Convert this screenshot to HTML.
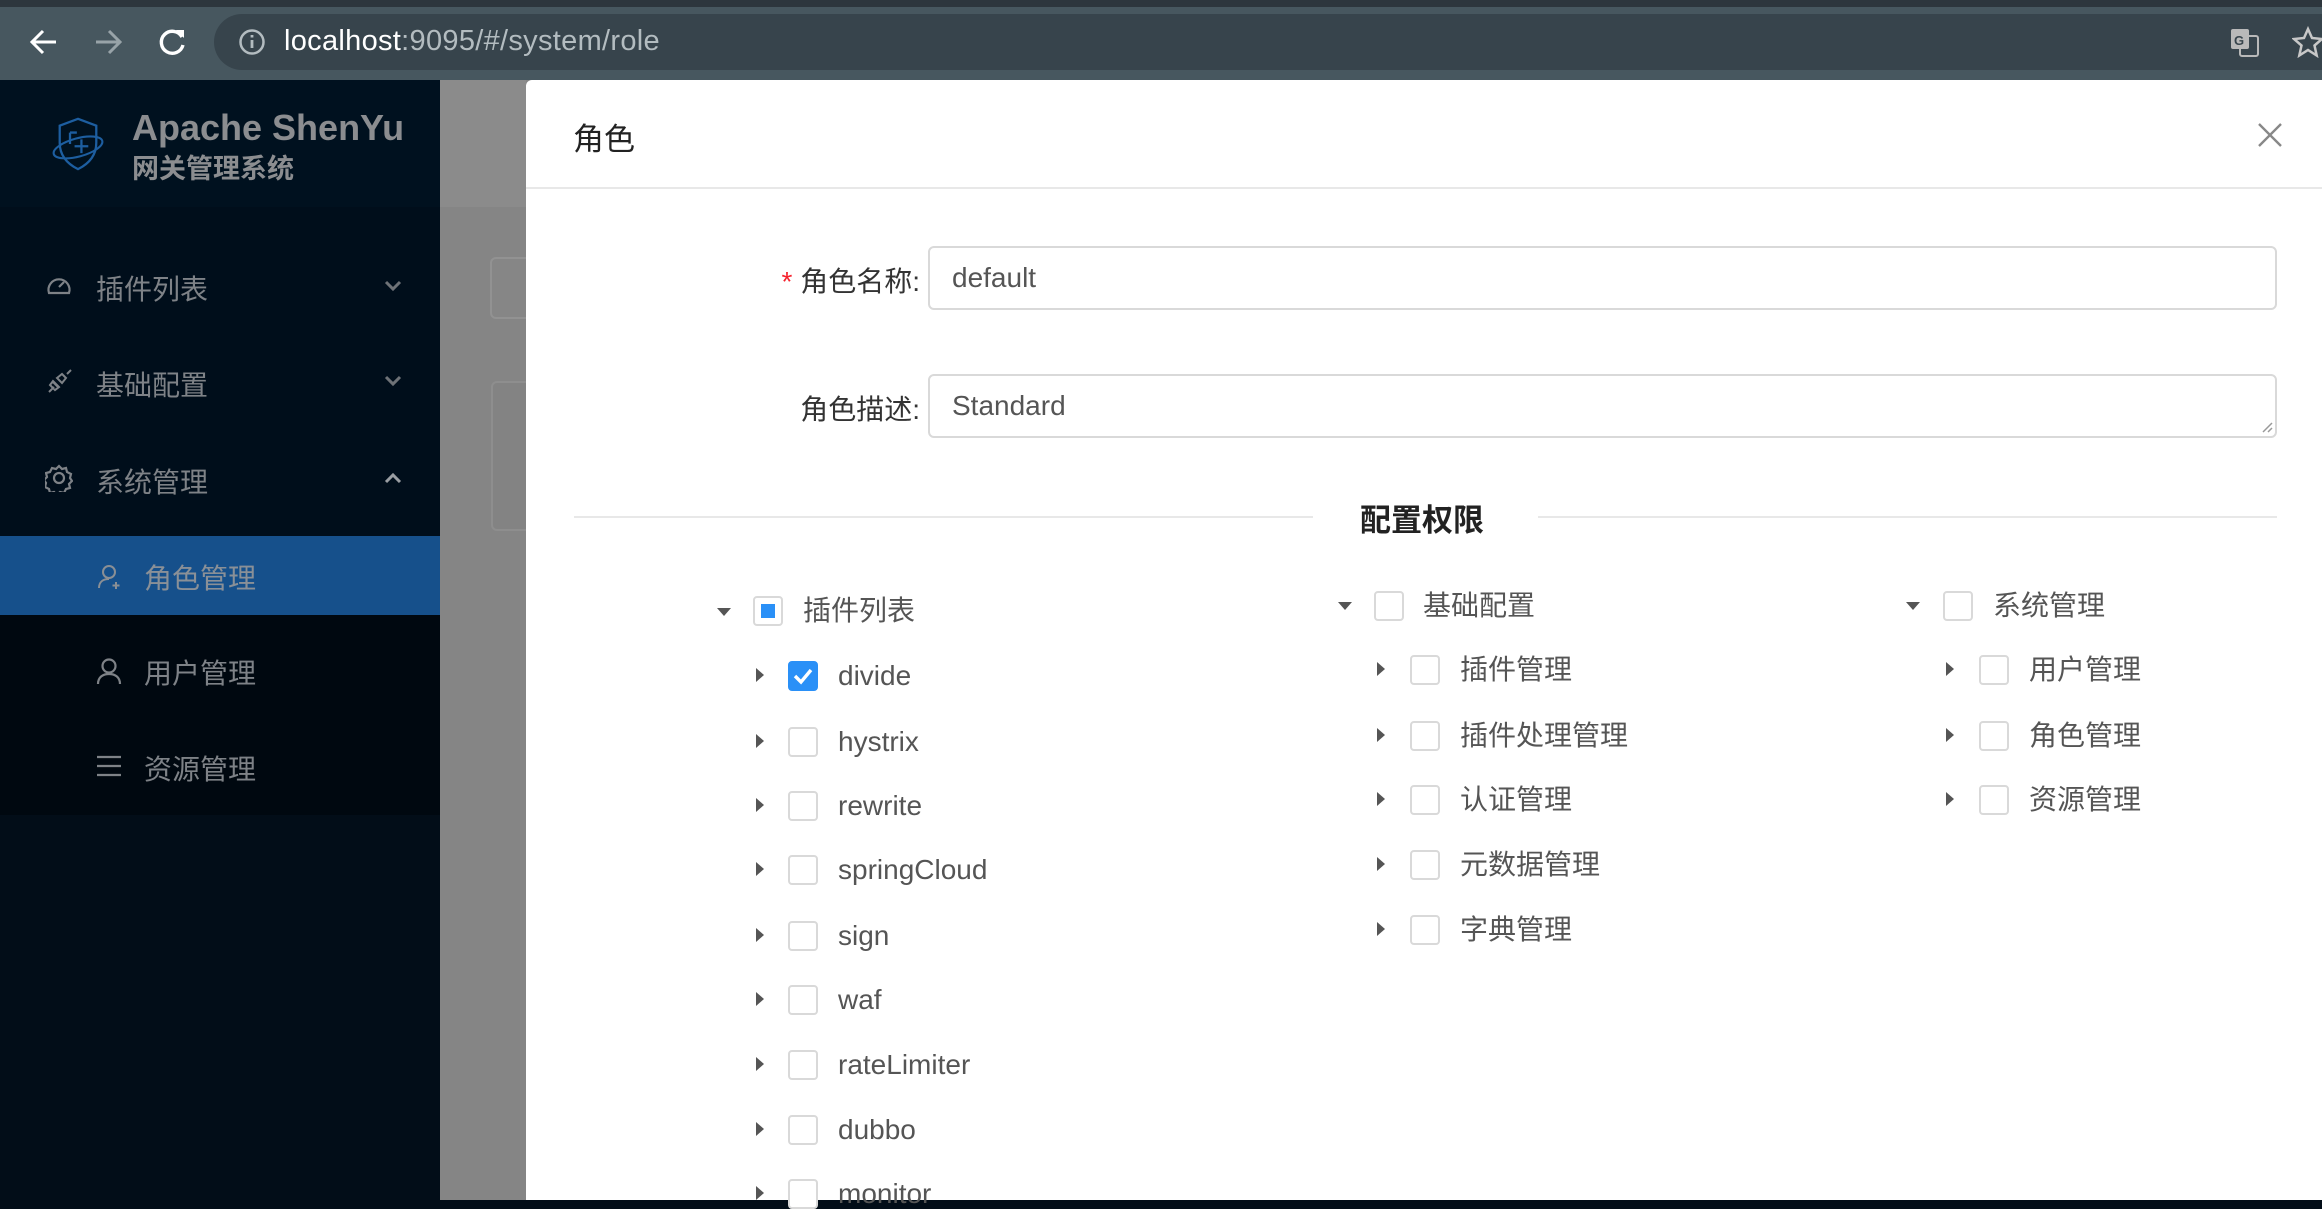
<!DOCTYPE html>
<html style="background:#020d18"><head><meta charset="utf-8"><style>
*{box-sizing:border-box;margin:0;padding:0}
body{width:2322px;height:1200px;overflow:hidden;background:#858585;font-family:"Liberation Sans","Noto Sans CJK SC",sans-serif;position:relative}
.abs{position:absolute}
.top{left:0;top:0;width:2322px;height:7px;background:#2d363d}
.bar{left:0;top:7px;width:2322px;height:73px;background:#47575f}
.url{left:214px;top:14px;width:2140px;height:56px;border-radius:28px;background:#37444c}
.urltext{left:284px;top:25px;font-size:29px;color:#b3bcc0;letter-spacing:0.3px}
.side{left:0;top:80px;width:440px;height:1120px;background:#020d18}
.logo{left:0;top:80px;width:440px;height:127px;background:#00111f}
.menu{left:0;top:207px;width:440px;height:330px;background:#000e1b}
.sub{left:0;top:537px;width:440px;height:278px;background:#000810}
.sel{left:0;top:536px;width:440px;height:79px;background:#16508b}
.mi{font-size:28px;color:#7e8287}
.modal{left:526px;top:80px;width:1800px;height:1120px;background:#fff;border-top-left-radius:6px}
.hdr{left:526px;top:187px;width:1796px;height:2px;background:#e8e8e8}
.lab{font-size:28px;color:#333;text-align:right}
.inp{border:2px solid #d9d9d9;border-radius:6px;background:#fff;font-size:28px;color:#555;padding-left:22px;display:flex;align-items:center}
.cb{width:30px;height:30px;border:2px solid #d9d9d9;border-radius:4px;background:#fff}
.car{width:0;height:0;border-top:7px solid transparent;border-bottom:7px solid transparent;border-left:8px solid #555}
.cdown{width:0;height:0;border-left:7px solid transparent;border-right:7px solid transparent;border-top:8px solid #555}
.t{font-size:28px;color:#555;line-height:30px}
</style></head><body>
<div class="abs top"></div><div class="abs bar"></div><div class="abs url"></div>
<svg class="abs" style="left:28px;top:26px" width="32" height="32" viewBox="0 0 32 32"><path d="M28 16H5M15 5L4 16l11 11" stroke="#fff" stroke-width="3" fill="none"/></svg>
<svg class="abs" style="left:92px;top:26px" width="32" height="32" viewBox="0 0 32 32"><path d="M4 16h23M17 5l11 11-11 11" stroke="#98a3a8" stroke-width="3" fill="none"/></svg>
<svg class="abs" style="left:156px;top:26px" width="32" height="32" viewBox="0 0 32 32"><path d="M26 11A11 11 0 1 0 27 19" stroke="#fff" stroke-width="3.4" fill="none"/><path d="M20 4h8v8z" fill="#fff"/></svg>
<svg class="abs" style="left:238px;top:28px" width="28" height="28" viewBox="0 0 28 28"><circle cx="14" cy="14" r="11.5" stroke="#b3bcc0" stroke-width="2.5" fill="none"/><path d="M14 12v8M14 7v2.5" stroke="#b3bcc0" stroke-width="2.8"/></svg>
<div class="abs urltext"><span style="color:#fff">localhost</span>:9095/#/system/role</div>
<svg class="abs" style="left:2230px;top:28px" width="30" height="30" viewBox="0 0 30 30"><rect x="1" y="1" width="18" height="20" rx="2" fill="#b9b9b9"/><rect x="10" y="8" width="18" height="20" rx="2" fill="none" stroke="#b9b9b9" stroke-width="2"/><text x="4" y="17" font-size="13" font-weight="bold" fill="#37444c" font-family="Liberation Sans">G</text></svg>
<svg class="abs" style="left:2292px;top:26px" width="32" height="32" viewBox="0 0 32 32"><path d="M16 3l4 9 10 1-7.5 6.5 2.2 10L16 24l-8.7 5.5 2.2-10L2 13l10-1z" stroke="#c8c8c8" stroke-width="2.5" fill="none"/></svg>

<div class="abs side"></div><div class="abs logo"></div><div class="abs menu"></div><div class="abs sub"></div><div class="abs sel"></div>
<svg class="abs" style="left:48px;top:112px" width="60" height="64" viewBox="0 0 50 56"><path d="M25 6l16 6v15c0 12-8 19-16 23C17 46 9 39 9 27V12z" stroke="#1d5ea0" stroke-width="2" fill="none"/><ellipse cx="25" cy="31" rx="22" ry="8" transform="rotate(-15 25 31)" stroke="#1d5ea0" stroke-width="1.8" fill="none"/><path d="M18 18v10M18 18h6M28 24v12M22 30h12" stroke="#1d5ea0" stroke-width="2"/></svg>
<div class="abs" style="left:132px;top:107px;font-size:36px;font-weight:bold;color:#8b8d90">Apache ShenYu</div>
<div class="abs" style="left:132px;top:147px;font-size:27px;font-weight:bold;color:#8b8d90">网关管理系统</div>

<svg class="abs" style="left:45px;top:272px" width="28" height="26" viewBox="0 0 26 26"><path d="M3 21a10.5 10.5 0 1 1 20 0z" stroke="#7e8287" stroke-width="2.2" fill="none"/><path d="M13 15l5-5" stroke="#7e8287" stroke-width="2.2"/></svg>
<div class="abs mi" style="left:96px;top:268px">插件列表</div>
<svg class="abs" style="left:383px;top:279px" width="20" height="14" viewBox="0 0 20 14"><path d="M3 3l7 7 7-7" stroke="#6e7277" stroke-width="3" fill="none"/></svg>
<svg class="abs" style="left:45px;top:367px" width="28" height="28" viewBox="0 0 28 28"><path d="M4 25l5-5M22 7l4-4M8 15l5 5M12 11l5-4 4 4-4 5z M8 14l-3 4 5 5 4-3z" stroke="#7e8287" stroke-width="2" fill="none"/></svg>
<div class="abs mi" style="left:96px;top:364px">基础配置</div>
<svg class="abs" style="left:383px;top:374px" width="20" height="14" viewBox="0 0 20 14"><path d="M3 3l7 7 7-7" stroke="#6e7277" stroke-width="3" fill="none"/></svg>
<svg class="abs" style="left:45px;top:464px" width="28" height="28" viewBox="0 0 28 28"><path d="M14 2l3 3 4-1 1 4 4 2-1 4 2 3-3 3 1 4-4 1-2 4-4-1-3 3-3-3-4 1-1-4-4-2 1-4-2-3 3-3-1-4 4-1 2-4 4 1z" stroke="#7e8287" stroke-width="2.2" fill="none"/><circle cx="14" cy="14" r="5" stroke="#7e8287" stroke-width="2.2" fill="none"/></svg>
<div class="abs mi" style="left:96px;top:461px">系统管理</div>
<svg class="abs" style="left:383px;top:471px" width="20" height="14" viewBox="0 0 20 14"><path d="M3 11l7-7 7 7" stroke="#9a9ea3" stroke-width="3" fill="none"/></svg>
<svg class="abs" style="left:96px;top:562px" width="28" height="28" viewBox="0 0 28 28"><circle cx="13" cy="10" r="6" stroke="#8a8f95" stroke-width="2" fill="none"/><path d="M3 26c0-6 4-9 10-9M20 20v7M16.5 23.5h7" stroke="#8a8f95" stroke-width="2" fill="none"/></svg>
<div class="abs mi" style="left:144px;top:557px;color:#8a9097">角色管理</div>
<svg class="abs" style="left:96px;top:657px" width="26" height="28" viewBox="0 0 26 28"><circle cx="13" cy="9" r="6.5" stroke="#7e8287" stroke-width="2.2" fill="none"/><path d="M2 27c0-7 5-10 11-10s11 3 11 10" stroke="#7e8287" stroke-width="2.2" fill="none"/></svg>
<div class="abs mi" style="left:144px;top:652px">用户管理</div>
<svg class="abs" style="left:96px;top:754px" width="26" height="24" viewBox="0 0 26 24"><path d="M1 3h24M1 12h24M1 21h24" stroke="#7e8287" stroke-width="2.2"/></svg>
<div class="abs mi" style="left:144px;top:748px">资源管理</div>

<div class="abs" style="left:440px;top:80px;width:86px;height:127px;background:#8b8b8b"></div>
<div class="abs" style="left:490px;top:257px;width:60px;height:62px;border:2px solid #929292;border-radius:6px;background:#868686"></div>
<div class="abs" style="left:491px;top:381px;width:60px;height:150px;border:2px solid #8e8e8e;border-radius:6px;background:#838383"></div>

<div class="abs modal"></div><div class="abs hdr"></div>
<div class="abs" style="left:573px;top:114px;font-size:31px;color:#222">角色</div>
<svg class="abs" style="left:2257px;top:122px" width="26" height="26" viewBox="0 0 26 26"><path d="M2 2l22 22M24 2L2 24" stroke="#888" stroke-width="2.4"/></svg>

<div class="abs lab" style="left:700px;top:260px;width:220px"><span style="color:#f5222d">* </span>角色名称:</div>
<div class="abs inp" style="left:928px;top:246px;width:1349px;height:64px">default</div>
<div class="abs lab" style="left:700px;top:388px;width:220px">角色描述:</div>
<div class="abs inp" style="left:928px;top:374px;width:1349px;height:64px">Standard</div>
<svg class="abs" style="left:2260px;top:420px" width="14" height="14" viewBox="0 0 14 14"><path d="M12 3L3 12M12 8l-4 4" stroke="#999" stroke-width="1.5"/></svg>
<div class="abs" style="left:574px;top:516px;width:739px;height:2px;background:#e8e8e8"></div>
<div class="abs" style="left:1538px;top:516px;width:739px;height:2px;background:#e8e8e8"></div>
<div class="abs" style="left:1360px;top:495px;font-size:31px;font-weight:bold;color:#222">配置权限</div>

<div class="abs cdown" style="left:717px;top:608px"></div>
<div class="abs cb" style="left:753px;top:596px"></div>
<div class="abs" style="left:761px;top:604px;width:14px;height:14px;background:#2a90f7"></div>
<div class="abs t" style="left:803px;top:596px">插件列表</div>

<div class="abs car" style="left:756px;top:668px"></div>
<div class="abs cb" style="left:788px;top:661px;background:#2a90f7;border-color:#2a90f7"></div>
<svg class="abs" style="left:792px;top:666px" width="22" height="20" viewBox="0 0 22 20"><path d="M3 10l6 6L19 4" stroke="#fff" stroke-width="3.4" fill="none"/></svg>
<div class="abs t" style="left:838px;top:661px">divide</div>

<div class="abs car" style="left:756px;top:734px"></div><div class="abs cb" style="left:788px;top:727px"></div><div class="abs t" style="left:838px;top:727px">hystrix</div>
<div class="abs car" style="left:756px;top:798px"></div><div class="abs cb" style="left:788px;top:791px"></div><div class="abs t" style="left:838px;top:791px">rewrite</div>
<div class="abs car" style="left:756px;top:862px"></div><div class="abs cb" style="left:788px;top:855px"></div><div class="abs t" style="left:838px;top:855px">springCloud</div>
<div class="abs car" style="left:756px;top:928px"></div><div class="abs cb" style="left:788px;top:921px"></div><div class="abs t" style="left:838px;top:921px">sign</div>
<div class="abs car" style="left:756px;top:992px"></div><div class="abs cb" style="left:788px;top:985px"></div><div class="abs t" style="left:838px;top:985px">waf</div>
<div class="abs car" style="left:756px;top:1057px"></div><div class="abs cb" style="left:788px;top:1050px"></div><div class="abs t" style="left:838px;top:1050px">rateLimiter</div>
<div class="abs car" style="left:756px;top:1122px"></div><div class="abs cb" style="left:788px;top:1115px"></div><div class="abs t" style="left:838px;top:1115px">dubbo</div>
<div class="abs car" style="left:756px;top:1186px"></div><div class="abs cb" style="left:788px;top:1179px"></div><div class="abs t" style="left:838px;top:1179px">monitor</div>

<div class="abs cdown" style="left:1338px;top:602px"></div>
<div class="abs cb" style="left:1374px;top:591px"></div><div class="abs t" style="left:1423px;top:591px">基础配置</div>
<div class="abs car" style="left:1377px;top:662px"></div><div class="abs cb" style="left:1410px;top:655px"></div><div class="abs t" style="left:1460px;top:655px">插件管理</div>
<div class="abs car" style="left:1377px;top:728px"></div><div class="abs cb" style="left:1410px;top:721px"></div><div class="abs t" style="left:1460px;top:721px">插件处理管理</div>
<div class="abs car" style="left:1377px;top:792px"></div><div class="abs cb" style="left:1410px;top:785px"></div><div class="abs t" style="left:1460px;top:785px">认证管理</div>
<div class="abs car" style="left:1377px;top:857px"></div><div class="abs cb" style="left:1410px;top:850px"></div><div class="abs t" style="left:1460px;top:850px">元数据管理</div>
<div class="abs car" style="left:1377px;top:922px"></div><div class="abs cb" style="left:1410px;top:915px"></div><div class="abs t" style="left:1460px;top:915px">字典管理</div>

<div class="abs cdown" style="left:1906px;top:602px"></div>
<div class="abs cb" style="left:1943px;top:591px"></div><div class="abs t" style="left:1993px;top:591px">系统管理</div>
<div class="abs car" style="left:1946px;top:662px"></div><div class="abs cb" style="left:1979px;top:655px"></div><div class="abs t" style="left:2029px;top:655px">用户管理</div>
<div class="abs car" style="left:1946px;top:728px"></div><div class="abs cb" style="left:1979px;top:721px"></div><div class="abs t" style="left:2029px;top:721px">角色管理</div>
<div class="abs car" style="left:1946px;top:792px"></div><div class="abs cb" style="left:1979px;top:785px"></div><div class="abs t" style="left:2029px;top:785px">资源管理</div>
</body></html>
